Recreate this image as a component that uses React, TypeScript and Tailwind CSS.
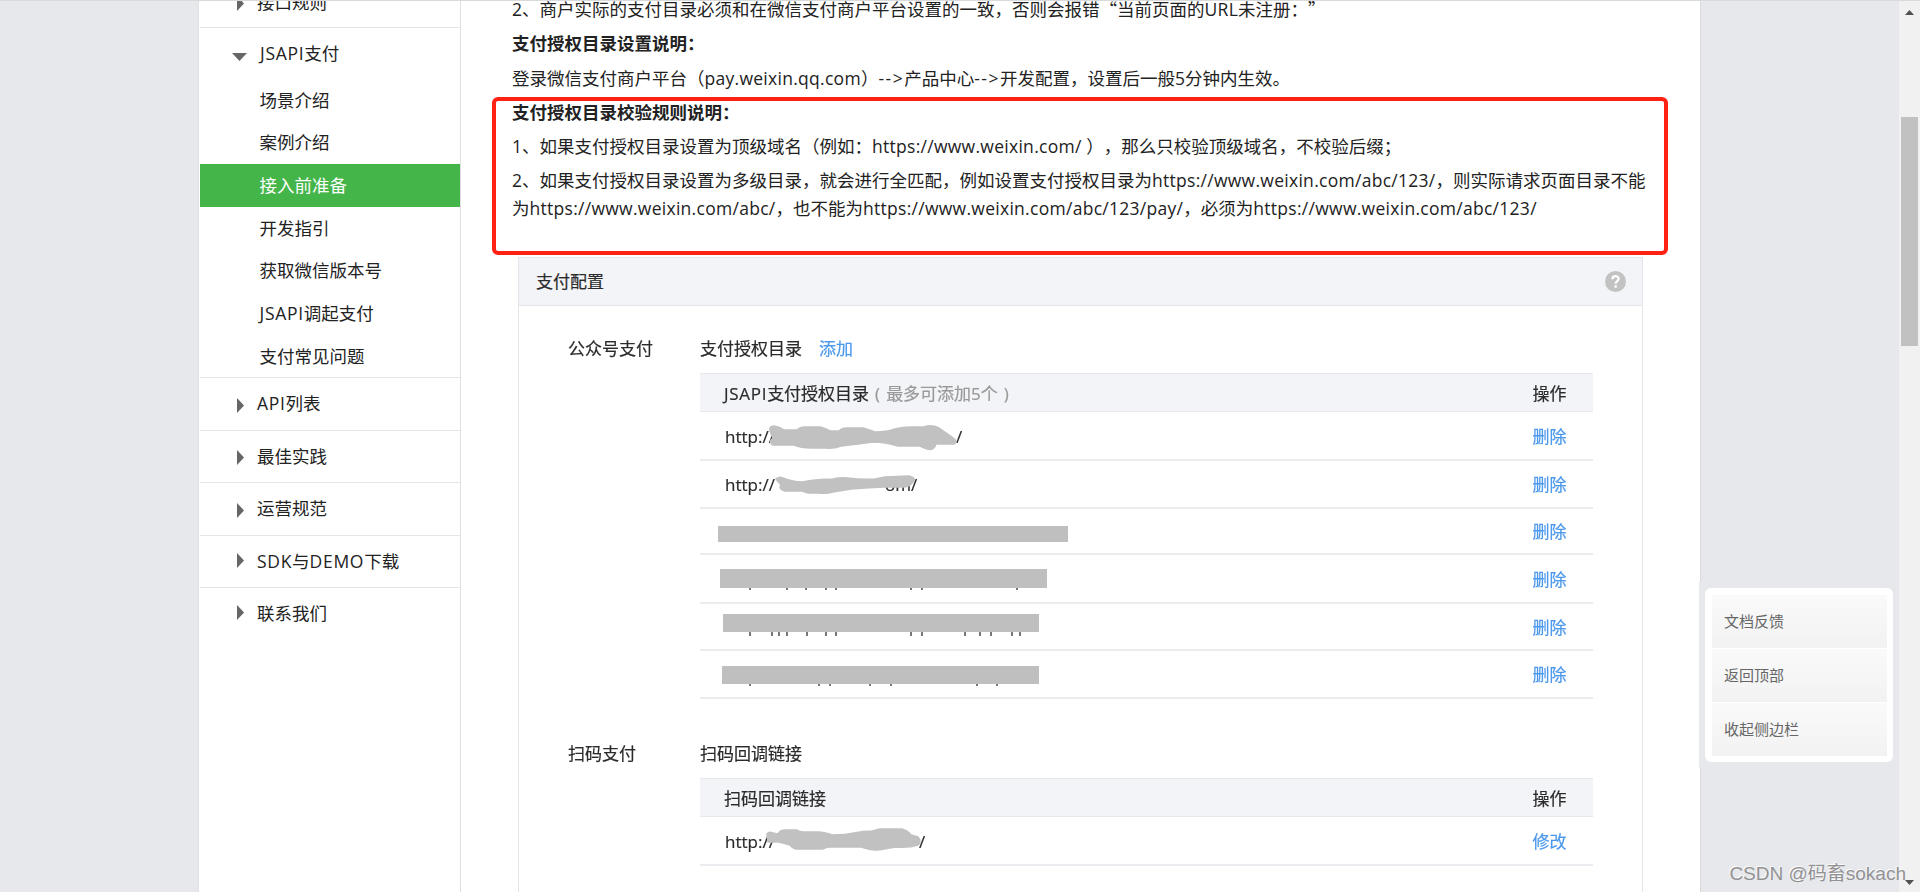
import type { ReactNode } from 'react'

const SUB_ITEMS = [
  '场景介绍',
  '案例介绍',
  '接入前准备',
  '开发指引',
  '获取微信版本号',
  'JSAPI调起支付',
  '支付常见问题',
]

const GROUPS = [
  { label: 'API列表', height: 'h-[53px]', arrow: 'mt-[2px]' },
  { label: '最佳实践', height: 'h-[52px]', arrow: 'mt-[2px]' },
  { label: '运营规范', height: 'h-[53px]', arrow: 'mt-[2px]' },
  { label: 'SDK与DEMO下载', height: 'h-[52px]', arrow: '-mt-[3px]' },
  { label: '联系我们', height: 'h-[51px]', arrow: '-mt-[3px]' },
]

const SCRIBBLES = {
  first: {
    className: 'left-[65px] top-[11px] h-[28px] w-[195px]',
    viewBox: '0 0 195 28',
    d: 'M5 8Q4 3 9 3Q15 4 19 7H32Q35 4 40 4H55Q60 5 65 8H74Q77 5 82 5H98Q105 7 110 9Q122 9 130 6Q138 4 145 4H159Q166 1 174 5L187 14Q194 19 189 21L171 21Q169 28 162 26Q157 24 155 23H133Q120 19 108 19Q100 20 93 21Q84 22 76 23Q68 26 61 25H46Q36 25 29 22H8Q3 19 8 15Z',
  },
  second: {
    className: 'left-[73px] top-[13px] h-[21px] w-[144px]',
    viewBox: '0 0 144 21',
    d: 'M3 5Q6 2 10 4Q20 8 29 8Q46 5 60 5Q67 3 75 4Q90 6 102 5L112 3L136 2Q144 4 140 8Q136 13 130 13H110Q90 14 78 15L60 18Q53 20 46 19H35L29 17H12Q5 15 8 11Z',
  },
  callback: {
    className: 'left-[64px] top-[11px] h-[23px] w-[159px]',
    viewBox: '0 0 159 23',
    d: 'M3 6Q5 3 9 5L14 6Q16 2 21 2H33Q36 4 42 4H55Q64 5 68 7Q82 7 90 5Q99 3 108 3L116 1H138Q144 3 147 7L154 9Q158 14 154 17Q145 20 132 19Q125 20 120 21Q112 23 104 21L97 19H66Q62 19 59 21H32Q28 20 26 17L15 14H4Z',
  },
}

// Solid bars over the hidden urls; ticks are the descenders that stick out below
const MASKED_ROWS = [
  { row: 'h-[46px]', bar: 'left-[17.5px] top-[17px] h-[16px] w-[350px]', ticks: [], tick: '' },
  { row: 'h-[49px]', bar: 'left-[19.5px] top-[14px] h-[19px] w-[327px]', ticks: [49, 86, 105, 125, 135, 210, 221, 316], tick: 'top-[32px] h-[3px]' },
  { row: 'h-[47px]', bar: 'left-[22.5px] top-[10px] h-[18px] w-[316px]', ticks: [49, 71, 78, 86, 106, 125, 135, 210, 221, 264, 279, 290, 311, 319], tick: 'top-[27px] h-[5px]' },
  { row: 'h-[48px]', bar: 'left-[21.5px] top-[15px] h-[18px] w-[317px]', ticks: [49, 118, 129, 169, 190, 276, 296], tick: 'top-[32px] h-[3px]' },
]

// Gives the latin capitals inside a chinese label a bit more room
function Label({ text }: { text: string }) {
  return (
    <span>
      {text.split(/([A-Z]+)/).map((part, i) => (
        <span key={i} className={i % 2 ? 'tracking-[0.7px]' : ''}>{part}</span>
      ))}
    </span>
  )
}

function Url({ children }: { children: ReactNode }) {
  return <span className="tracking-[0.28px]">{children}</span>
}

function RightArrow({ className }: { className: string }) {
  return (
    <svg className={`h-[15px] w-[7px] shrink-0 ${className}`} viewBox="0 0 7 15" fill="#666">
      <path d="M0 0L7 7.5L0 15Z" />
    </svg>
  )
}

function Scribble({ shape }: { shape: { className: string; viewBox: string; d: string } }) {
  return (
    <svg className={`absolute ${shape.className}`} viewBox={shape.viewBox}>
      <path d={shape.d} fill="#c1c1c1" stroke="#c1c1c1" strokeWidth="1.5" strokeLinejoin="round" />
    </svg>
  )
}

function Sidebar() {
  return (
    <nav className="w-[263px] shrink-0 border-x border-[#dfe0e3] bg-white pl-px text-[17.5px] text-[#222]">
      <div className="flex h-[27px] items-center border-b border-[#e4e5e8] pl-[37px]">
        <RightArrow className="-mt-[22px]" />
        <span className="-mt-[22px] pl-[13px] leading-none">接口规则</span>
      </div>
      <div className="flex h-[50.6px] items-center pl-[32px]">
        <svg className="mt-[7px] h-[8px] w-[15px] shrink-0" viewBox="0 0 15 8" fill="#666">
          <path d="M0 0H15L7.5 8Z" />
        </svg>
        <span className="-mt-px pl-[13px]"><Label text="JSAPI支付" /></span>
      </div>
      <ul className="border-b border-[#e4e5e8]">
        {SUB_ITEMS.map(item => (
          <li
            key={item}
            className={`flex h-[42.65px] items-center pl-[59.5px] ${item === '接入前准备' ? 'bg-[#44b549] pb-px text-white' : ''}`}
          >
            <Label text={item} />
          </li>
        ))}
      </ul>
      {GROUPS.map((g, i) => (
        <div
          key={g.label}
          className={`flex items-center pl-[37px] ${g.height} ${i < GROUPS.length - 1 ? 'border-b border-[#e4e5e8]' : ''}`}
        >
          <RightArrow className={g.arrow} />
          <span className="-mt-px pl-[13px]"><Label text={g.label} /></span>
        </div>
      ))}
    </nav>
  )
}

function TableHead({ children }: { children: ReactNode }) {
  return (
    <div className="flex h-[39px] items-center justify-between border-y border-[#e7e8ee] bg-[#f3f4f8] pl-[24px] pr-[26.5px] pt-px">
      <span>{children}</span>
      <span>操作</span>
    </div>
  )
}

function TableRow({ height, action, children }: { height: string; action: string; children?: ReactNode }) {
  return (
    <div className={`relative flex items-center border-b-2 border-[#ebecf0] pl-[25px] pr-[26.5px] pt-px ${height}`}>
      {children}
      <a className="ml-auto text-[#4b98eb]">{action}</a>
    </div>
  )
}

function PayConfig() {
  return (
    <section className="ml-[6px] mt-[35px] h-[700px] w-[1125px] border border-[#e4e5e9] text-[17px] leading-none text-[#2b2b2b] blur-[0.4px] [-webkit-text-stroke:0.2px]">
      <header className="flex h-[48px] items-center justify-between border-b border-[#e4e5e9] bg-[#f3f4f8] pl-[17px] pr-[16px]">
        <span>支付配置</span>
        <svg className="h-[21px] w-[21px]" viewBox="0 0 21 21" fill="none">
          <circle cx="10.5" cy="10.5" r="10.5" fill="#c2c2c2" />
          <path d="M7.4 8.2C7.4 4.1 13.7 4.3 13.6 8C13.5 10.2 10.6 10.2 10.6 12.8" stroke="#fff" strokeWidth="2.2" />
          <path d="M9.4 14.4H11.8V16.7H9.4Z" fill="#fff" />
        </svg>
      </header>

      <div className="flex pl-[49px] pr-[49px] pt-[34px]">
        <div className="w-[132px] shrink-0">公众号支付</div>
        <div className="flex-1">
          <div className="flex gap-[17px]">
            <span>支付授权目录</span>
            <a className="text-[#4b98eb]">添加</a>
          </div>
          <div className="mt-[16px]">
            <TableHead>
              <Label text="JSAPI支付授权目录" />
              <span className="text-[#999]">
                <span className="inline-block w-[17px] text-center">(</span>最多可添加5个
                <span className="inline-block w-[17px] text-center">)</span>
              </span>
            </TableHead>
            <TableRow height="h-[49px]" action="删除">
              <span className="w-[231px]">http://</span>
              <span>/</span>
              <Scribble shape={SCRIBBLES.first} />
            </TableRow>
            <TableRow height="h-[48px]" action="删除">
              <span className="w-[160px]">http://</span>
              <span>om/</span>
              <Scribble shape={SCRIBBLES.second} />
            </TableRow>
            {MASKED_ROWS.map((r, i) => (
              <TableRow key={i} height={r.row} action="删除">
                {r.ticks.map(x => (
                  <i key={x} className={`absolute w-[1.5px] bg-[#777] ${r.tick}`} style={{ left: x }} />
                ))}
                <div className={`absolute bg-[#bfbfbf] ${r.bar}`} />
              </TableRow>
            ))}
          </div>
        </div>
      </div>

      <div className="flex pl-[49px] pr-[49px] pt-[46px]">
        <div className="w-[132px] shrink-0">扫码支付</div>
        <div className="flex-1">
          <div>扫码回调链接</div>
          <div className="mt-[16px]">
            <TableHead>扫码回调链接</TableHead>
            <TableRow height="h-[49px]" action="修改">
              <span className="w-[194px]">http://</span>
              <span>/</span>
              <Scribble shape={SCRIBBLES.callback} />
            </TableRow>
          </div>
        </div>
      </div>
    </section>
  )
}

function Article() {
  return (
    <main className="relative flex-1 border-r border-[#d9dadc] bg-white pl-[51px] text-[17.5px] leading-[28px] text-[#222]">
      <div className="-mt-[6px] flex flex-col gap-[6.3px] whitespace-nowrap">
        <p className="[text-spacing-trim:space-all]">
          2、商户实际的支付目录必须和在微信支付商户平台设置的一致，否则会报错
          <span className="font-['Noto_Sans_CJK_SC',sans-serif]">“</span>
          当前页面的<Url>URL</Url>未注册：
          <span className="font-['Noto_Sans_CJK_SC',sans-serif]">”</span>
        </p>
        <p className="font-bold">支付授权目录设置说明：</p>
        <p>
          登录微信支付商户平台（<Url>pay.weixin.qq.com</Url>）
          <span className="tracking-[1.5px]">--&gt;</span>产品中心
          <span className="tracking-[1.5px]">--&gt;</span>开发配置，设置后一般5分钟内生效。
        </p>
        <p className="font-bold">支付授权目录校验规则说明：</p>
        <p className="[text-spacing-trim:space-all]">
          1、如果支付授权目录设置为顶级域名（例如：<Url>https://www.weixin.com/</Url> ），那么只校验顶级域名，不校验后缀；
        </p>
        <p>
          2、如果支付授权目录设置为多级目录，就会进行全匹配，例如设置支付授权目录为<Url>https://www.weixin.com/abc/123/</Url>，则实际请求页面目录不能
          <br />
          为<Url>https://www.weixin.com/abc/</Url>，也不能为<Url>https://www.weixin.com/abc/123/pay/</Url>，必须为<Url>https://www.weixin.com/abc/123/</Url>
        </p>
      </div>
      <div className="absolute left-[31px] top-[96px] h-[158px] w-[1176px] rounded-[6px] border-4 border-[#ff2214]" />
      <PayConfig />
    </main>
  )
}

function FloatMenu() {
  return (
    <div className="absolute left-[1699px] top-[581px] bg-[#e7e8eb] p-[6px]">
      <div className="w-[188px] rounded-[6px] bg-white py-[6px] pl-[7px] pr-[6px] text-[15px] text-[#666]">
        {['文档反馈', '返回顶部', '收起侧边栏'].map(t => (
          <div
            key={t}
            className="flex h-[54px] items-center border-t border-white bg-linear-to-b from-[#fafafa] to-[#f2f2f2] pl-[12px]"
          >
            {t}
          </div>
        ))}
      </div>
    </div>
  )
}

function Scrollbar() {
  return (
    <div className="flex w-[21px] shrink-0 flex-col items-center bg-[#f1f1f1]">
      <svg className="mt-[9px] h-[5px] w-[9px]" viewBox="0 0 9 5" fill="#505050">
        <path d="M4.5 0L9 5H0Z" />
      </svg>
      <div className="mt-[102px] h-[229px] w-[17px] bg-[#c1c1c1]" />
      <svg className="mb-[7px] mt-auto h-[5px] w-[9px]" viewBox="0 0 9 5" fill="#505050">
        <path d="M4.5 5L9 0H0Z" />
      </svg>
    </div>
  )
}

export default function App() {
  return (
    <div className="relative flex h-[892px] w-[1920px] overflow-hidden border-t border-[#d9dadc] bg-[#e7e8eb] font-['Open_Sans','Noto_Sans_CJK_SC',sans-serif]">
      <div className="flex w-[1899px]">
        <div className="w-[198px] shrink-0" />
        <Sidebar />
        <Article />
        <div className="w-[198px] shrink-0" />
      </div>
      <Scrollbar />
      <FloatMenu />
      <div className="absolute bottom-[5px] right-[14px] whitespace-nowrap font-['Liberation_Sans','Noto_Sans_CJK_SC',sans-serif] text-[19px] leading-[26px] text-[#929294] [text-shadow:-1px_-1px_0_#fafafa]">
        CSDN @码畜sokach
      </div>
    </div>
  )
}
